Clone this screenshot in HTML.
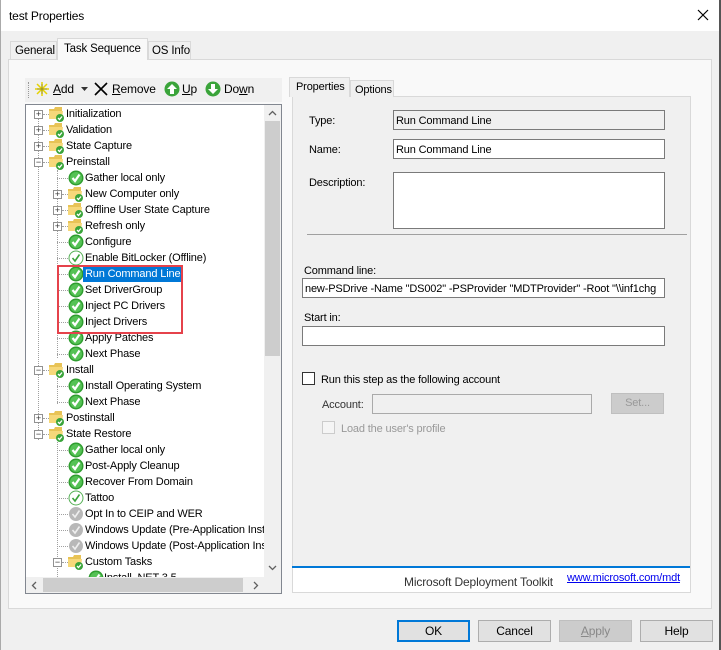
<!DOCTYPE html>
<html><head><meta charset="utf-8"><style>
*{box-sizing:border-box;margin:0;padding:0}
html,body{width:721px;height:650px;overflow:hidden}
body{background:#f0f0f0;font-family:"Liberation Sans",sans-serif;font-size:11px;letter-spacing:-0.15px;color:#000;position:relative}
.a{position:absolute}
.t{white-space:nowrap;line-height:16px}
.box{position:absolute;border:1px solid #7a7a7a;background:#fff}
.btn{position:absolute;border:1px solid #adadad;background:#e1e1e1;text-align:center;line-height:22px;font-size:12px}
.row{position:absolute;height:16px;line-height:17px;white-space:nowrap}
.exp{position:absolute;width:9px;height:9px;border:1px solid #919191;background:#fff;font-size:9px;line-height:7px;text-align:center;color:#333;letter-spacing:0}
.dot{position:absolute;border-top:1px dotted #a0a0a0}
.vdot{position:absolute;border-left:1px dotted #a0a0a0}
</style></head><body>
<div class="a" style="left:0;top:0;width:721px;height:31px;background:#fff"></div>
<div class="a t" style="left:9px;top:8px;font-size:12px">test Properties</div>
<svg class="a" style="left:697px;top:9px" width="12" height="12"><path d="M1 1L11 11M11 1L1 11" stroke="#000" stroke-width="1.2"/></svg>
<div class="a" style="left:719px;top:0;width:2px;height:650px;background:#555"></div>
<div class="a" style="left:0;top:0;width:1px;height:650px;background:#aaa"></div>
<div class="a" style="left:8px;top:59px;width:704px;height:550px;border:1px solid #d9d9d9;background:#f9f9f9"></div>
<div class="a t" style="left:10px;top:41px;width:47px;height:18px;border:1px solid #d9d9d9;border-bottom:none;background:#f0f0f0;padding:1px 0 0 4px;font-size:11.5px">General</div>
<div class="a t" style="left:57px;top:38px;width:91px;height:22px;border:1px solid #d9d9d9;border-bottom:none;background:#f9f9f9;padding:2px 0 0 6px;font-size:11.5px">Task Sequence</div>
<div class="a t" style="left:148px;top:41px;width:43px;height:18px;border:1px solid #d9d9d9;border-bottom:none;background:#f0f0f0;padding:1px 0 0 3px;font-size:11.5px">OS Info</div>
<div class="a" style="left:25px;top:78px;width:257px;height:24px;background:#f0f0f0"></div>
<div class="vdot" style="left:28px;top:82px;height:16px;border-color:#999"></div>
<svg class="a" style="left:34px;top:81px" width="16" height="16"><path d="M8 1V15M1 8H15M3 3L13 13M13 3L3 13" stroke="#e5d300" stroke-width="1.5"/><path d="M8 3V13M3 8H13" stroke="#555" stroke-width=".5"/></svg>
<div class="a t" style="left:53px;top:81px;font-size:12px"><u>A</u>dd</div>
<svg class="a" style="left:81px;top:87px" width="7" height="4"><path d="M0 0H7L3.5 4Z" fill="#333"/></svg>
<svg class="a" style="left:94px;top:82px" width="14" height="14"><path d="M1 1L13 13M13 1L1 13" stroke="#000" stroke-width="1.6"/></svg>
<div class="a t" style="left:112px;top:81px;font-size:12px"><u>R</u>emove</div>
<svg class="a" style="left:164px;top:81px" width="16" height="16"><circle cx="8" cy="8" r="7.5" fill="#3aa43a"/><path d="M8 3L3 8H6V13H10V8H13Z" fill="#fff"/></svg>
<div class="a t" style="left:182px;top:81px;font-size:12px"><u>U</u>p</div>
<svg class="a" style="left:205px;top:81px" width="16" height="16"><circle cx="8" cy="8" r="7.5" fill="#3aa43a"/><path d="M8 13L3 8H6V3H10V8H13Z" fill="#fff"/></svg>
<div class="a t" style="left:224px;top:81px;font-size:12px">Do<u>w</u>n</div>
<div class="a" style="left:25px;top:104px;width:257px;height:490px;border:1px solid #828790;background:#fff"></div>
<svg width="0" height="0" style="position:absolute;left:0;top:0"><defs>
<g id="fold"><path d="M0 3H5L6 1H13V13H0Z" fill="#e8c356"/><path d="M0 5H14L13 13H0Z" fill="#f6d87a"/><circle cx="11" cy="12" r="4" fill="#3aa43a"/><path d="M9 12L10.5 13.5L13 10.5" stroke="#fff" stroke-width="1.3" fill="none"/></g>
<g id="chk"><circle cx="8" cy="8" r="7.5" fill="#2f9d2f"/><circle cx="8" cy="8" r="6" fill="#55c255"/><path d="M4.5 8L7 11L11.5 4.5" stroke="#fff" stroke-width="2.2" fill="none"/></g>
<g id="chkl"><circle cx="8" cy="8" r="7" fill="#fff" stroke="#55b055"/><path d="M4.5 8L7 11L11.5 4.5" stroke="#3aa43a" stroke-width="1.6" fill="none"/></g>
<g id="gry"><circle cx="8" cy="8" r="7" fill="#b8b8b8"/><path d="M4.5 8L7 11L11.5 4.5" stroke="#eee" stroke-width="1.6" fill="none"/></g>
</defs></svg>
<div class="a" style="left:26px;top:105px;width:238px;height:472px;overflow:hidden">
<div class="a" style="left:-26px;top:-105px;width:290px;height:577px">
<div class="vdot" style="left:38px;top:110px;height:330px"></div>
<div class="vdot" style="left:57px;top:170px;height:188px"></div>
<div class="vdot" style="left:57px;top:378px;height:26px"></div>
<div class="vdot" style="left:57px;top:442px;height:135px"></div>
<div id="tree"></div>
</div></div>
<script>
var rows=[
[0,'+','fold','Initialization'],[0,'+','fold','Validation'],[0,'+','fold','State Capture'],[0,'-','fold','Preinstall'],
[1,'','chk','Gather local only'],[1,'+','fold','New Computer only'],[1,'+','fold','Offline User State Capture'],[1,'+','fold','Refresh only'],
[1,'','chk','Configure'],[1,'','chkl','Enable BitLocker (Offline)'],[1,'','chk','Run Command Line'],[1,'','chk','Set DriverGroup'],
[1,'','chk','Inject PC Drivers'],[1,'','chk','Inject Drivers'],[1,'','chk','Apply Patches'],[1,'','chk','Next Phase'],
[0,'-','fold','Install'],[1,'','chk','Install Operating System'],[1,'','chk','Next Phase'],[0,'+','fold','Postinstall'],
[0,'-','fold','State Restore'],[1,'','chk','Gather local only'],[1,'','chk','Post-Apply Cleanup'],[1,'','chk','Recover From Domain'],
[1,'','chkl','Tattoo'],[1,'','gry','Opt In to CEIP and WER'],[1,'','gry','Windows Update (Pre-Application Installs)'],[1,'','gry','Windows Update (Post-Application Installs)'],
[1,'-','fold','Custom Tasks']];
var h='';
rows.forEach(function(r,i){
 var y=106+i*16, lv=r[0], ex=lv?57:38, ix=lv?68:49, tx=lv?85:66;
 if(r[1]) h+='<div class="exp" style="left:'+(ex-4)+'px;top:'+(y+4)+'px">'+(r[1]=='+'?'+':'&minus;')+'</div><div class="dot" style="left:'+(ex+5)+'px;top:'+(y+8)+'px;width:'+(ix-ex-5)+'px"></div>';
 else h+='<div class="dot" style="left:'+ex+'px;top:'+(y+8)+'px;width:'+(ix-ex)+'px"></div>';
 h+='<svg class="a" style="left:'+ix+'px;top:'+y+'px" width="16" height="16"><use href="#'+r[2]+'"/></svg>';
 var sel=i==10;
 h+='<div class="row" style="left:'+(tx-2)+'px;top:'+y+'px;padding:0 2px;'+(sel?'background:#0078d7;color:#fff;':'')+'">'+r[3]+'</div>';
});
h+='<svg class="a" style="left:88px;top:570px" width="16" height="7"><use href="#chk"/></svg><div class="row" style="left:104px;top:570px;height:7px;overflow:hidden">Install .NET 3.5</div>';
document.getElementById('tree').innerHTML=h;
</script>
<div class="a" style="left:264px;top:105px;width:17px;height:472px;background:#f0f0f0"></div>
<div class="a" style="left:265px;top:121px;width:15px;height:235px;background:#cdcdcd"></div>
<svg class="a" style="left:268px;top:110px" width="9" height="6"><path d="M1 5L4.5 1.5L8 5" stroke="#606060" fill="none" stroke-width="1.3"/></svg>
<svg class="a" style="left:268px;top:565px" width="9" height="6"><path d="M1 1L4.5 4.5L8 1" stroke="#606060" fill="none" stroke-width="1.3"/></svg>
<div class="a" style="left:26px;top:577px;width:255px;height:16px;background:#f0f0f0"></div>
<div class="a" style="left:43px;top:578px;width:200px;height:14px;background:#cdcdcd"></div>
<svg class="a" style="left:31px;top:581px" width="6" height="9"><path d="M5 1L1.5 4.5L5 8" stroke="#606060" fill="none" stroke-width="1.3"/></svg>
<svg class="a" style="left:253px;top:581px" width="6" height="9"><path d="M1 1L4.5 4.5L1 8" stroke="#606060" fill="none" stroke-width="1.3"/></svg>
<div class="a" style="left:57px;top:265px;width:126px;height:69px;border:2px solid #e5424b"></div>
<div class="a" style="left:292px;top:96px;width:399px;height:497px;border:1px solid #d9d9d9;background:#f0f0f0"></div>
<div class="a t" style="left:350px;top:80px;width:44px;height:17px;border:1px solid #d9d9d9;border-bottom:none;background:#f0f0f0;padding:1px 0 0 4px">Options</div>
<div class="a t" style="left:289px;top:77px;width:61px;height:20px;border:1px solid #d9d9d9;border-bottom:none;background:#f0f0f0;padding:1px 0 0 6px">Properties</div>
<div class="a t" style="left:309px;top:113px">Type:</div>
<div class="box" style="left:393px;top:110px;width:272px;height:20px;background:#f0f0f0"></div>
<div class="a t" style="left:396px;top:113px">Run Command Line</div>
<div class="a t" style="left:309px;top:142px">Name:</div>
<div class="box" style="left:393px;top:139px;width:272px;height:20px"></div>
<div class="a t" style="left:396px;top:142px">Run Command Line</div>
<div class="a t" style="left:309px;top:175px">Description:</div>
<div class="box" style="left:393px;top:172px;width:272px;height:57px"></div>
<div class="a" style="left:307px;top:234px;width:380px;height:1px;background:#a0a0a0"></div>
<div class="a t" style="left:304px;top:263px">Command line:</div>
<div class="box" style="left:302px;top:278px;width:363px;height:20px;overflow:hidden"><div class="t" style="padding:2px 0 0 2px">new-PSDrive -Name "DS002" -PSProvider "MDTProvider" -Root "\\inf1chg</div></div>
<div class="a t" style="left:304px;top:310px">Start in:</div>
<div class="box" style="left:302px;top:326px;width:363px;height:20px"></div>
<div class="a" style="left:302px;top:372px;width:13px;height:13px;border:1px solid #333;background:#fff"></div>
<div class="a t" style="left:321px;top:372px">Run this step as the following account</div>
<div class="a t" style="left:322px;top:397px;color:#333">Account:</div>
<div class="box" style="left:372px;top:394px;width:220px;height:20px;background:#f0f0f0;border-color:#aaa"></div>
<div class="btn" style="left:611px;top:393px;width:53px;height:21px;background:#ccc;border-color:#bfbfbf;color:#999;line-height:19px;font-size:11px">Set...</div>
<div class="a" style="left:322px;top:421px;width:13px;height:13px;border:1px solid #ccc;background:#f5f5f5"></div>
<div class="a t" style="left:341px;top:421px;color:#999">Load the user's profile</div>
<div class="a" style="left:293px;top:566px;width:397px;height:26px;background:#fff"></div>
<div class="a" style="left:292px;top:566px;width:398px;height:2px;background:#0078d7"></div>
<div class="a t" style="left:404px;top:574px;color:#333;font-size:12px">Microsoft Deployment Toolkit</div>
<div class="a t" style="left:567px;top:570px;color:#0000ee;text-decoration:underline;font-size:11px">www.microsoft.com/mdt</div>
<div class="btn" style="left:397px;top:620px;width:73px;height:22px;border:2px solid #0078d7;line-height:18px">OK</div>
<div class="btn" style="left:478px;top:620px;width:73px;height:22px;line-height:20px">Cancel</div>
<div class="btn" style="left:559px;top:620px;width:73px;height:22px;background:#ccc;border-color:#bfbfbf;color:#888;line-height:20px"><u>A</u>pply</div>
<div class="btn" style="left:640px;top:620px;width:73px;height:22px;line-height:20px">Help</div>
</body></html>
